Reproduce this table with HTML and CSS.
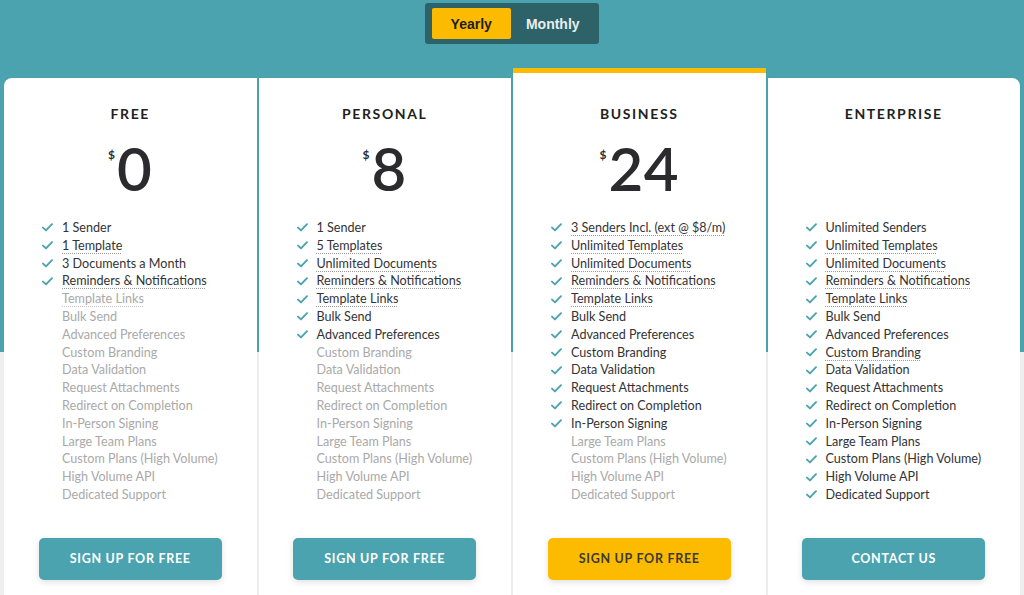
FILE: index.html
```html
<!DOCTYPE html>
<html lang="en">
<head>
<meta charset="utf-8">
<title>Pricing</title>
<link rel="stylesheet" href="styles.css">
</head>
<body>
<div class="page">
  <div class="toggle-wrap">
    <div class="toggle">
      <button class="toggle-btn active">Yearly</button>
      <button class="toggle-btn">Monthly</button>
    </div>
  </div>

  <div class="plans">
    <section class="card first">
      <h2 class="plan-name">FREE</h2>
      <div class="price"><span class="cur">$</span><span class="amount">0</span></div>
      <ul class="features">
        <li class="on"><span class="ck"></span><span>1 Sender</span></li>
        <li class="on"><span class="ck"></span><span class="tip">1 Template</span></li>
        <li class="on"><span class="ck"></span><span>3 Documents a Month</span></li>
        <li class="on"><span class="ck"></span><span class="tip">Reminders &amp; Notifications</span></li>
        <li class="off"><span class="ck"></span><span class="tip">Template Links</span></li>
        <li class="off"><span class="ck"></span><span>Bulk Send</span></li>
        <li class="off"><span class="ck"></span><span>Advanced Preferences</span></li>
        <li class="off"><span class="ck"></span><span>Custom Branding</span></li>
        <li class="off"><span class="ck"></span><span>Data Validation</span></li>
        <li class="off"><span class="ck"></span><span>Request Attachments</span></li>
        <li class="off"><span class="ck"></span><span>Redirect on Completion</span></li>
        <li class="off"><span class="ck"></span><span>In-Person Signing</span></li>
        <li class="off"><span class="ck"></span><span>Large Team Plans</span></li>
        <li class="off"><span class="ck"></span><span>Custom Plans (High Volume)</span></li>
        <li class="off"><span class="ck"></span><span>High Volume API</span></li>
        <li class="off"><span class="ck"></span><span>Dedicated Support</span></li>
      </ul>
      <div class="cta"><button class="btn">SIGN UP FOR FREE</button></div>
    </section>

    <section class="card">
      <h2 class="plan-name">PERSONAL</h2>
      <div class="price"><span class="cur">$</span><span class="amount">8</span></div>
      <ul class="features">
        <li class="on"><span class="ck"></span><span>1 Sender</span></li>
        <li class="on"><span class="ck"></span><span class="tip">5 Templates</span></li>
        <li class="on"><span class="ck"></span><span class="tip">Unlimited Documents</span></li>
        <li class="on"><span class="ck"></span><span class="tip">Reminders &amp; Notifications</span></li>
        <li class="on"><span class="ck"></span><span class="tip">Template Links</span></li>
        <li class="on"><span class="ck"></span><span>Bulk Send</span></li>
        <li class="on"><span class="ck"></span><span>Advanced Preferences</span></li>
        <li class="off"><span class="ck"></span><span>Custom Branding</span></li>
        <li class="off"><span class="ck"></span><span>Data Validation</span></li>
        <li class="off"><span class="ck"></span><span>Request Attachments</span></li>
        <li class="off"><span class="ck"></span><span>Redirect on Completion</span></li>
        <li class="off"><span class="ck"></span><span>In-Person Signing</span></li>
        <li class="off"><span class="ck"></span><span>Large Team Plans</span></li>
        <li class="off"><span class="ck"></span><span>Custom Plans (High Volume)</span></li>
        <li class="off"><span class="ck"></span><span>High Volume API</span></li>
        <li class="off"><span class="ck"></span><span>Dedicated Support</span></li>
      </ul>
      <div class="cta"><button class="btn">SIGN UP FOR FREE</button></div>
    </section>

    <section class="card featured">
      <h2 class="plan-name">BUSINESS</h2>
      <div class="price"><span class="cur">$</span><span class="amount">24</span></div>
      <ul class="features">
        <li class="on"><span class="ck"></span><span class="tip">3 Senders Incl. (ext @ $8/m)</span></li>
        <li class="on"><span class="ck"></span><span class="tip">Unlimited Templates</span></li>
        <li class="on"><span class="ck"></span><span class="tip">Unlimited Documents</span></li>
        <li class="on"><span class="ck"></span><span class="tip">Reminders &amp; Notifications</span></li>
        <li class="on"><span class="ck"></span><span class="tip">Template Links</span></li>
        <li class="on"><span class="ck"></span><span>Bulk Send</span></li>
        <li class="on"><span class="ck"></span><span>Advanced Preferences</span></li>
        <li class="on"><span class="ck"></span><span>Custom Branding</span></li>
        <li class="on"><span class="ck"></span><span>Data Validation</span></li>
        <li class="on"><span class="ck"></span><span>Request Attachments</span></li>
        <li class="on"><span class="ck"></span><span>Redirect on Completion</span></li>
        <li class="on"><span class="ck"></span><span>In-Person Signing</span></li>
        <li class="off"><span class="ck"></span><span>Large Team Plans</span></li>
        <li class="off"><span class="ck"></span><span>Custom Plans (High Volume)</span></li>
        <li class="off"><span class="ck"></span><span>High Volume API</span></li>
        <li class="off"><span class="ck"></span><span>Dedicated Support</span></li>
      </ul>
      <div class="cta"><button class="btn btn-yellow">SIGN UP FOR FREE</button></div>
    </section>

    <section class="card last">
      <h2 class="plan-name">ENTERPRISE</h2>
      <div class="price price-empty"></div>
      <ul class="features">
        <li class="on"><span class="ck"></span><span>Unlimited Senders</span></li>
        <li class="on"><span class="ck"></span><span class="tip">Unlimited Templates</span></li>
        <li class="on"><span class="ck"></span><span class="tip">Unlimited Documents</span></li>
        <li class="on"><span class="ck"></span><span class="tip">Reminders &amp; Notifications</span></li>
        <li class="on"><span class="ck"></span><span class="tip">Template Links</span></li>
        <li class="on"><span class="ck"></span><span>Bulk Send</span></li>
        <li class="on"><span class="ck"></span><span>Advanced Preferences</span></li>
        <li class="on"><span class="ck"></span><span class="tip">Custom Branding</span></li>
        <li class="on"><span class="ck"></span><span>Data Validation</span></li>
        <li class="on"><span class="ck"></span><span>Request Attachments</span></li>
        <li class="on"><span class="ck"></span><span>Redirect on Completion</span></li>
        <li class="on"><span class="ck"></span><span>In-Person Signing</span></li>
        <li class="on"><span class="ck"></span><span>Large Team Plans</span></li>
        <li class="on"><span class="ck"></span><span>Custom Plans (High Volume)</span></li>
        <li class="on"><span class="ck"></span><span>High Volume API</span></li>
        <li class="on"><span class="ck"></span><span>Dedicated Support</span></li>
      </ul>
      <div class="cta"><button class="btn">CONTACT US</button></div>
    </section>
  </div>
</div>
</body>
</html>
```

FILE: styles.css
```css
* { box-sizing: border-box; }

html, body {
  margin: 0;
  padding: 0;
}

body {
  width: 1024px;
  height: 595px;
  overflow: hidden;
  font-family: Lato, "Open Sans", "Liberation Sans", sans-serif;
  background: linear-gradient(to bottom, #4aa3ae 0, #4aa3ae 352px, #efefef 352px, #efefef 100%);
}

.page {
  padding: 0 4px;
}

.toggle-wrap {
  display: flex;
  justify-content: center;
  padding-top: 3px;
}

.toggle {
  display: flex;
  align-items: center;
  background: #2c6268;
  border-radius: 3px;
  padding: 6px 7px;
  width: 174px;
  height: 41px;
}

.toggle-btn {
  border: 0;
  background: transparent;
  color: #e9eef0;
  font-family: "Liberation Sans", Arial, sans-serif;
  font-weight: 700;
  font-size: 14px;
  height: 31px;
  padding: 0;
  width: 80px;
  border-radius: 2px;
  cursor: pointer;
}

.toggle-btn + .toggle-btn {
  width: 80px;
  margin-left: 3px;
}

.toggle-btn.active {
  background: #fdbb00;
  color: #1f1f1f;
}

.plans {
  display: grid;
  grid-template-columns: repeat(4, 1fr);
  column-gap: 2px;
  align-items: start;
  margin-top: 34px;
}

.card {
  background: #fff;
  height: 517px;
  padding-top: 26px;
  box-shadow: 0 0 1px rgba(0,0,0,0.08);
}

.card.first { border-top-left-radius: 8px; }
.card.last { border-top-right-radius: 8px; }

.card.featured {
  margin-top: -10px;
  height: 527px;
  border-top: 5px solid #fdbb00;
  padding-top: 31px;
}

.plan-name {
  margin: 0;
  text-align: center;
  font-size: 14px;
  line-height: 20px;
  font-weight: 700;
  letter-spacing: 1.6px;
  color: #231f20;
}

.price {
  display: flex;
  justify-content: center;
  align-items: flex-start;
  height: 60px;
  margin-top: 14px;
  margin-bottom: 21px;
  color: #2b2b2e;
}

.cur {
  font-size: 12px;
  font-weight: 700;
  line-height: 1;
  margin-top: 11px;
  margin-right: 2px;
}

.amount {
  font-size: 60px;
  line-height: 60px;
  font-weight: 600;
  letter-spacing: 0.5px;
}

.features {
  list-style: none;
  margin: 0;
  padding: 0 0 0 38px;
  font-size: 12.6px;
  line-height: 17.8px;
}

.features li {
  display: flex;
  align-items: center;
  gap: 9px;
  white-space: nowrap;
}

.ck {
  width: 11px;
  height: 9px;
  flex: none;
}

.features li.on .ck {
  background: no-repeat center / 11px 9px url("data:image/svg+xml,%3Csvg xmlns='http://www.w3.org/2000/svg' viewBox='0 0 11 9'%3E%3Cpath d='M1 4.6 L4 7.4 L10 1.2' fill='none' stroke='%234aa3ae' stroke-width='1.9' stroke-linecap='round' stroke-linejoin='round'/%3E%3C/svg%3E");
}

.features li.on { color: #333336; }
.features li.off { color: #a9a9a9; }

.tip {
  text-decoration: underline dotted #9a9a9a;
  text-decoration-thickness: 1px;
  text-underline-offset: 3px;
}

.features li.off .tip {
  text-decoration-color: #c2c2c2;
}

.cta {
  display: flex;
  justify-content: center;
  margin-top: 34px;
}

.btn {
  width: 183px;
  height: 42px;
  border: 0;
  border-radius: 5px;
  background: #4aa3ae;
  color: #fff;
  font-family: Lato, "Open Sans", sans-serif;
  font-weight: 700;
  font-size: 12.5px;
  letter-spacing: 0.7px;
  box-shadow: 0 2px 6px rgba(0,0,0,0.13);
  cursor: pointer;
}

.btn-yellow {
  background: #fdbb00;
  color: #3a3a3a;
}
```
